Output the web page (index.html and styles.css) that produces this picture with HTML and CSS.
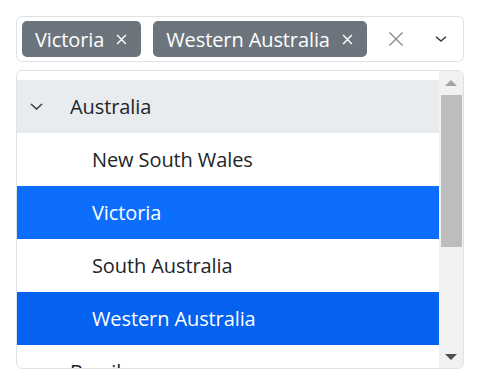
FILE: index.html
```html
<!DOCTYPE html>
<html lang="en">
<head>
  <meta charset="UTF-8" />
  <title>Region select</title>
  <link rel="stylesheet" href="styles.css">
</head>
<body>
  <div class="picker">
    <div class="control">
      <span class="tag">Victoria
        <svg class="tag-x" viewBox="0 0 10 10"><path d="M1 1L9 9M9 1L1 9"/></svg>
      </span>
      <span class="tag">Western Australia
        <svg class="tag-x" viewBox="0 0 10 10"><path d="M1 1L9 9M9 1L1 9"/></svg>
      </span>
      <svg class="clear" viewBox="0 0 14 14"><path d="M0.5 0.5L13.5 13.5M13.5 0.5L0.5 13.5"/></svg>
      <svg class="caret" viewBox="0 0 12 6"><path d="M1 0.8L6 5L11 0.8"/></svg>
    </div>

    <div class="menu">
      <div class="list">
        <div class="opt group">
          <svg class="chev" viewBox="0 0 13 7"><path d="M1 1L6.5 6L12 1"/></svg>
          Australia
        </div>
        <div class="opt child">New South Wales</div>
        <div class="opt child selected">Victoria</div>
        <div class="opt child">South Australia</div>
        <div class="opt child selected hover">Western Australia</div>
        <div class="opt group">
          <svg class="chev" viewBox="0 0 13 7"><path d="M3 -3L9 2L3 7"/></svg>
          Brazil
        </div>
      </div>
      <div class="scrollbar">
        <div class="sb-btn"><span class="arrow up"></span></div>
        <div class="sb-track"><div class="sb-thumb"></div></div>
        <div class="sb-btn"><span class="arrow down"></span></div>
      </div>
    </div>
  </div>
</body>
</html>
```

FILE: styles.css
```css
* {
  box-sizing: border-box;
}
body {
  margin: 0;
  padding: 16px;
  background: #fff;
  font-family: "Open Sans", "Noto Sans", sans-serif;
  color: #212529;
}
.picker {
  width: 448px;
}
.control {
  height: 46px;
  border: 1px solid #dee2e6;
  border-radius: 6px;
  display: flex;
  align-items: center;
  padding: 0 5px;
}
.tag {
  height: 36px;
  display: flex;
  align-items: center;
  gap: 12px;
  padding: 0 14px 0 13px;
  margin-right: 12px;
  background: #6c757d;
  color: #fff;
  border-radius: 5px;
  font-size: 20px;
  letter-spacing: -0.1px;
  white-space: nowrap;
}
.tag-x {
  width: 11px;
  height: 11px;
  stroke: #fff;
  stroke-width: 1.3;
  fill: none;
}
.clear {
  width: 14px;
  height: 14px;
  margin-left: 10px;
  stroke: #7d858c;
  stroke-width: 1.2;
  fill: none;
}
.caret {
  width: 12px;
  height: 6px;
  margin-left: 32px;
  stroke: #343a40;
  stroke-width: 1.5;
  fill: none;
}
.menu {
  margin-top: 8px;
  height: 299px;
  border: 1px solid #dee2e6;
  border-radius: 6px;
  overflow: hidden;
  display: flex;
}
.list {
  flex: 1;
  padding-top: 9px;
  overflow: hidden;
}
.opt {
  height: 53px;
  display: flex;
  align-items: center;
  font-size: 20px;
  letter-spacing: -0.1px;
  white-space: nowrap;
}
.group {
  padding-left: 13px;
}
.group:first-child {
  background: #e9ecef;
}
.chev {
  width: 13px;
  height: 7px;
  margin-right: 27px;
  stroke: #343a40;
  stroke-width: 1.5;
  fill: none;
}
.child {
  padding-left: 75px;
}
.selected {
  background: #0d6efd;
  color: #fff;
}
.selected.hover {
  background: #0561f0;
}
.scrollbar {
  width: 24px;
  background: #f1f1f1;
  display: flex;
  flex-direction: column;
}
.sb-btn {
  height: 23px;
  display: flex;
  align-items: center;
  justify-content: center;
}
.sb-track {
  flex: 1;
  padding: 1px 1px 0 2px;
}
.sb-thumb {
  height: 152px;
  background: #bdbdbd;
}
.arrow {
  width: 0;
  height: 0;
  border-left: 6px solid transparent;
  border-right: 6px solid transparent;
}
.arrow.up {
  border-bottom: 6px solid #a3a3a3;
}
.arrow.down {
  border-top: 6px solid #505050;
}
```
